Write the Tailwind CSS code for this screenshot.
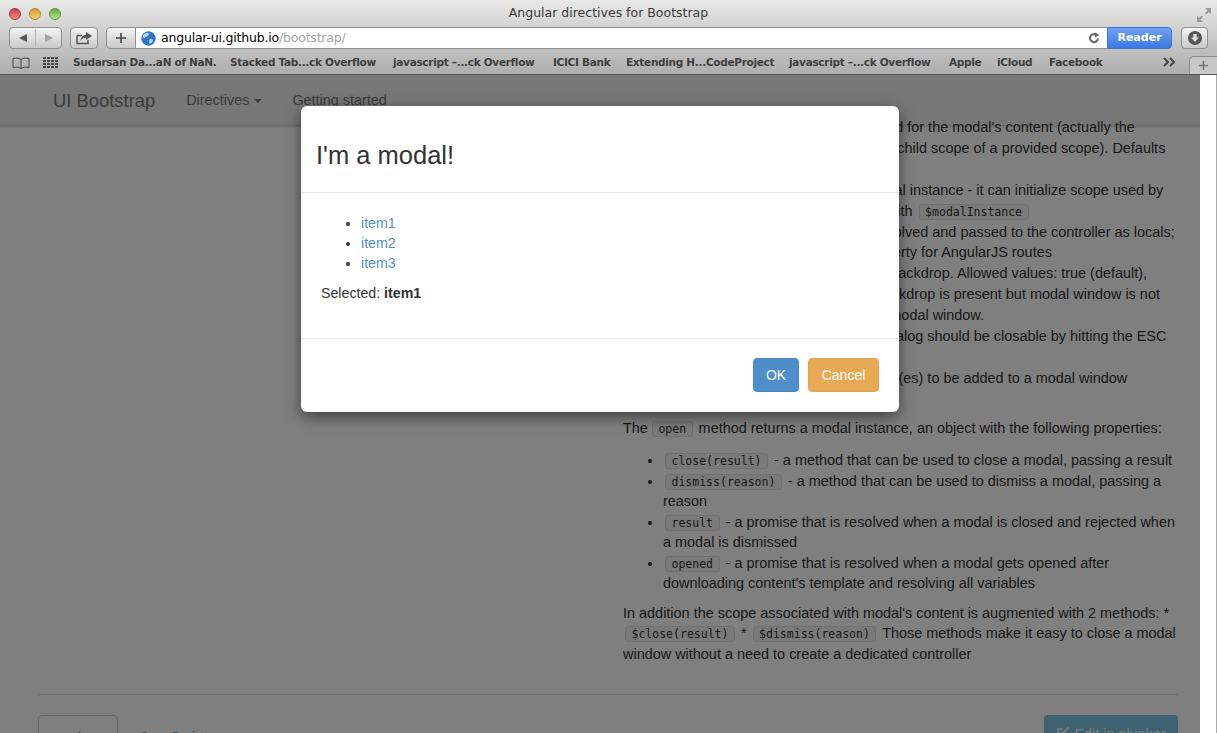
<!DOCTYPE html>
<html lang="en">
<head>
    <meta charset="UTF-8">
    <title>Angular directives for Bootstrap</title>
    <script src="https://cdn.jsdelivr.net/npm/@tailwindcss/browser@4"></script>
</head>
<body class="h-[733px] w-[1217px] overflow-hidden bg-white font-['Liberation_Sans',sans-serif] text-[#333]">

    <!-- Safari chrome -->
    <header class="relative z-30 h-[75px] border-b border-[#555] bg-gradient-to-b from-[#e9e9e9] via-[#c4c4c4] via-60% to-[#aeaeae] font-['DejaVu_Sans',sans-serif]">
        <div class="h-[51px] pt-[2px]">
            <div class="relative flex h-[25px] items-center justify-center pb-[2px] text-[12.5px] text-[#3a3a3a]">
                <div class="absolute left-[9px] top-[6px] flex gap-[8px]">
                    <span class="size-[12px] rounded-full border border-[#a33] bg-gradient-to-b from-[#c8424a] to-[#f58a84]"></span>
                    <span class="size-[12px] rounded-full border border-[#b5832a] bg-gradient-to-b from-[#d49a2e] to-[#f7d170]"></span>
                    <span class="size-[12px] rounded-full border border-[#5b9a3a] bg-gradient-to-b from-[#6aaa3c] to-[#b3e58e]"></span>
                </div>
                Angular directives for Bootstrap
                <svg class="absolute right-[5px] top-[5px]" width="16" height="16" viewBox="0 0 16 16" fill="#9a9a9a"><path d="M9 1h6v6l-2-2-2.500 2.500-1.500-1.500 2.500-2.500zM7 15H1V9l2 2 2.500-2.500 1.500 1.500L4.500 12.500z"/></svg>
            </div>
            <div class="flex h-[22px] items-center pl-[9px]">
                <div class="flex h-[22px] w-[53px] items-center rounded-[4px] border border-[#8f8f8f] bg-gradient-to-b from-[#f4f4f4] to-[#c9c9c9]">
                    <span class="flex flex-1 justify-center"><svg width="10" height="10" viewBox="0 0 10 10" fill="#555"><path d="M9 1v8L1 5z"/></svg></span>
                    <span class="h-[18px] w-px bg-[#b5b5b5]"></span>
                    <span class="flex flex-1 justify-center"><svg width="10" height="10" viewBox="0 0 10 10" fill="#a5a5a5"><path d="M1 1v8l8-4z"/></svg></span>
                </div>
                <div class="ml-[8px] flex h-[22px] w-[28px] items-center justify-center rounded-[4px] border border-[#8f8f8f] bg-gradient-to-b from-[#f4f4f4] to-[#c9c9c9]">
                    <svg width="18" height="14" viewBox="0 0 18 14" fill="none"><path d="M2 4.500h5M2 4.500v8h11V9" stroke="#555" stroke-width="1.500"/><path d="M11 1l6 4-6 4V6.800C8.500 6.800 6.500 8 5.500 10c.2-3.500 2.500-6 5.500-6.200z" fill="#555"/></svg>
                </div>
                <div class="ml-[8px] flex h-[22px] flex-1">
                    <div class="flex w-[30px] items-center justify-center rounded-l-[4px] border border-[#8f8f8f] bg-gradient-to-b from-[#f4f4f4] to-[#c9c9c9] text-[#444]">
                        <svg width="10" height="10" viewBox="0 0 10 10" fill="#444"><path d="M4.200 0h1.600v4.200H10v1.600H5.800V10H4.200V5.800H0V4.200h4.200z"/></svg>
                    </div>
                    <div class="flex flex-1 items-center border-y border-[#8f8f8f] bg-white pl-[5px] text-[12.5px] tracking-[-0.2px] text-black">
                        <svg class="mr-[5px] shrink-0" width="15" height="15" viewBox="0 0 15 15"><circle cx="7.500" cy="7.500" r="7.200" fill="#2f74c9"/><path d="M3 3c2-1.500 4-1.500 5-.5S7 5 5.500 5.500 4 8 2.500 7 1.800 4 3 3zM9 8c1.500-.5 3 0 3 1.500S10 13 8.800 12.500 8 8.500 9 8z" fill="#a9d2f5"/></svg>
                        <span>angular-ui.github.io</span><span class="text-[#a3a3a3]">/bootstrap/</span>
                        <svg class="ml-auto mr-[7px]" width="12" height="12" viewBox="0 0 12 12" fill="none"><path d="M10 6.500A4 4 0 1 1 8.500 3" stroke="#666" stroke-width="2"/><path d="M7 0.500l4.500 2.500-4.500 2.500z" fill="#666"/></svg>
                    </div>
                    <div class="flex w-[65px] items-center justify-center rounded-r-[4px] border border-[#3f74d0] bg-gradient-to-b from-[#6ea2f2] to-[#3a78e4] text-[11px] font-bold text-white">Reader</div>
                </div>
                <div class="mx-[9px] flex h-[22px] w-[27px] items-center justify-center rounded-[4px] border border-[#8f8f8f] bg-gradient-to-b from-[#f4f4f4] to-[#c9c9c9]">
                    <svg width="14" height="14" viewBox="0 0 14 14"><circle cx="7" cy="7" r="7" fill="#555"/><path d="M5.300 3h3.400v3.500H11L7 11 3 6.500h2.300z" fill="#ddd"/></svg>
                </div>
            </div>
        </div>
        <div class="relative flex h-[23px] items-center pl-[12px] text-[10.5px] font-bold tracking-[-0.3px] whitespace-nowrap text-[#3f3f3f]">
            <svg class="shrink-0" width="18" height="12" viewBox="0 0 18 12" fill="none" stroke="#444"><path d="M9 2.500C7 1 4 .8 1 1.500v9c3-.7 6-.5 8 1 2-1.500 5-1.700 8-1v-9c-3-.7-6-.5-8 1zM9 2.500v9"/></svg>
            <svg class="ml-[13px] mr-[15px] shrink-0" width="15" height="11" viewBox="0 0 15 11" fill="#444"><path d="M0 0h3v2H0zM4 0h3v2H4zM8 0h3v2H8zM12 0h3v2h-3zM0 3h3v2H0zM4 3h3v2H4zM8 3h3v2H8zM12 3h3v2h-3zM0 6h3v2H0zM4 6h3v2H4zM8 6h3v2H8zM12 6h3v2h-3zM0 9h3v2H0zM4 9h3v2H4zM8 9h3v2H8zM12 9h3v2h-3z"/></svg>
            <span class="w-[157px]">Sudarsan Da...aN of NaN.</span>
            <span class="w-[163px]">Stacked Tab...ck Overflow</span>
            <span class="w-[160px]">javascript –...ck Overflow</span>
            <span class="w-[73px]">ICICI Bank</span>
            <span class="w-[163px]">Extending H...CodeProject</span>
            <span class="w-[160px]">javascript –...ck Overflow</span>
            <span class="w-[48px]">Apple</span>
            <span class="w-[52px]">iCloud</span>
            <span>Facebook</span>
            <svg class="absolute right-[40px] top-[6px]" width="14" height="10" viewBox="0 0 14 10" fill="none" stroke="#444" stroke-width="2"><path d="M1 1l4 4-4 4M7 1l4 4-4 4"/></svg>
            <div class="absolute bottom-0 right-0 flex h-[18px] w-[28px] items-center justify-center rounded-tl-[5px] border-l border-t border-[#8d8d8d] bg-[#c8c8c8] font-normal text-[#555]">
                <svg width="9" height="9" viewBox="0 0 9 9" fill="#777"><path d="M3.700 0h1.600v3.700H9v1.600H5.300V9H3.700V5.300H0V3.700h3.700z"/></svg>
            </div>
        </div>
    </header>

    <!-- page behind the backdrop -->
    <div class="relative flex h-[658px] overflow-hidden">
        <div class="relative w-[1200px] shrink-0 overflow-hidden bg-white">
            <nav class="flex h-[51px] items-center border-b border-[#d4d4d4] bg-[#eee] pl-[53px] pt-[2px] text-[#777] shadow-[0_1px_2px_rgba(0,0,0,0.15)]">
                <span class="text-[18.4px]">UI Bootstrap</span>
                <span class="ml-[31px] text-[14.4px]">Directives <span class="ml-[1px] inline-block border-x-[4px] border-t-[4px] border-x-transparent border-t-[#777] align-middle"></span></span>
                <span class="ml-[30px] text-[14.4px]">Getting started</span>
            </nav>
            <div class="ml-[623px] w-[555px] text-[14.45px] text-[#333]">
                <ul class="-mt-[9px] list-disc pl-[40px] leading-[20.9px] whitespace-nowrap">
                    <li><code class="rounded-[3px] border border-[#e2e2e2] bg-[#f5f5f5] px-[5.5px] font-['DejaVu_Sans_Mono',monospace] text-[11.5px] leading-none">scope</code> - a scope instance to be used for the modal's content (actually the<br><code class="rounded-[3px] border border-[#e2e2e2] bg-[#f5f5f5] px-[5.5px] font-['DejaVu_Sans_Mono',monospace] text-[11.5px] leading-none">$modal</code> service is going to create a child scope of a provided scope). Defaults<br>to $rootScope</li>
                    <li><code class="rounded-[3px] border border-[#e2e2e2] bg-[#f5f5f5] px-[5.5px] font-['DejaVu_Sans_Mono',monospace] text-[11.5px] leading-none">controller</code> - a controller for a modal instance - it can initialize scope used by<br>modal. A controller can be injected with <code class="ml-[2px] rounded-[3px] border border-[#e2e2e2] bg-[#f5f5f5] px-[5.5px] font-['DejaVu_Sans_Mono',monospace] text-[11.5px] leading-none">$modalInstance</code></li>
                    <li><code class="rounded-[3px] border border-[#e2e2e2] bg-[#f5f5f5] px-[5.5px] font-['DejaVu_Sans_Mono',monospace] text-[11.5px] leading-none">resolve</code> - members that will be resolved and passed to the controller as locals;<br>it is equivalent of the <code class="rounded-[3px] border border-[#e2e2e2] bg-[#f5f5f5] px-[5.5px] font-['DejaVu_Sans_Mono',monospace] text-[11.5px] leading-none">resolve</code> property for AngularJS routes</li>
                    <li><code class="rounded-[3px] border border-[#e2e2e2] bg-[#f5f5f5] px-[5.5px] font-['DejaVu_Sans_Mono',monospace] text-[11.5px] leading-none">backdrop</code> - controls presence of a backdrop. Allowed values: true (default),<br>false (no backdrop), <code class="rounded-[3px] border border-[#e2e2e2] bg-[#f5f5f5] px-[5.5px] font-['DejaVu_Sans_Mono',monospace] text-[11.5px] leading-none">'static'</code> - backdrop is present but modal window is not<br>closed when clicking outside of the modal window.</li>
                    <li><code class="rounded-[3px] border border-[#e2e2e2] bg-[#f5f5f5] px-[5.5px] font-['DejaVu_Sans_Mono',monospace] text-[11.5px] leading-none">keyboard</code> - indicates whether the dialog should be closable by hitting the ESC<br>key, defaults to true</li>
                    <li><span class="mr-[6px]">windowClass</span> - additional CSS class(es) to be added to a modal window<br>template</li>
                </ul>
                <p class="mt-[8px] leading-[20.5px]">The <code class="mr-[2px] rounded-[3px] border border-[#e2e2e2] bg-[#f5f5f5] px-[5.5px] font-['DejaVu_Sans_Mono',monospace] text-[11.5px] leading-none">open</code> method returns a modal instance, an object with the following properties:</p>
                <ul class="mt-[12px] list-disc pl-[40px] leading-[20.5px]">
                    <li><code class="mx-[2px] rounded-[3px] border border-[#e2e2e2] bg-[#f5f5f5] px-[5.5px] font-['DejaVu_Sans_Mono',monospace] text-[11.5px] leading-none">close(result)</code> - a method that can be used to close a modal, passing a result</li>
                    <li><code class="mx-[2px] rounded-[3px] border border-[#e2e2e2] bg-[#f5f5f5] px-[5.5px] font-['DejaVu_Sans_Mono',monospace] text-[11.5px] leading-none">dismiss(reason)</code> - a method that can be used to dismiss a modal, passing a reason</li>
                    <li><code class="mx-[2px] rounded-[3px] border border-[#e2e2e2] bg-[#f5f5f5] px-[5.5px] font-['DejaVu_Sans_Mono',monospace] text-[11.5px] leading-none">result</code> - a promise that is resolved when a modal is closed and rejected when a modal is dismissed</li>
                    <li><code class="mx-[2px] rounded-[3px] border border-[#e2e2e2] bg-[#f5f5f5] px-[5.5px] font-['DejaVu_Sans_Mono',monospace] text-[11.5px] leading-none">opened</code> - a promise that is resolved when a modal gets opened after downloading content's template and resolving all variables</li>
                </ul>
                <p class="mt-[9px] leading-[20.5px]">In addition the scope associated with modal's content is augmented with 2 methods: * <code class="mx-[2px] rounded-[3px] border border-[#e2e2e2] bg-[#f5f5f5] px-[5.5px] font-['DejaVu_Sans_Mono',monospace] text-[11.5px] leading-none">$close(result)</code> * <code class="mx-[2px] rounded-[3px] border border-[#e2e2e2] bg-[#f5f5f5] px-[5.5px] font-['DejaVu_Sans_Mono',monospace] text-[11.5px] leading-none">$dismiss(reason)</code> Those methods make it easy to close a modal window without a need to create a dedicated controller</p>
            </div>
            <div class="ml-[38px] mr-[22px] mt-[30px] flex border-t border-[#ddd] pt-[20px] text-[14.4px]">
                <span class="h-[40px] w-[80px] rounded-t-[4px] border border-[#ccc] pl-[14px] pt-[12px] text-[#555]">Markup</span>
                <span class="ml-[22px] pt-[12px] text-[#428bca]">JavaScript</span>
                <span class="ml-auto flex h-[40px] w-[134px] items-start justify-center rounded-[4px] bg-[#7dc5e5] pt-[9px] text-white">
                    <svg class="mr-[4px] mt-[2px]" width="14" height="14" viewBox="0 0 14 14" fill="none" stroke="#fff" stroke-width="1.500"><path d="M12 8v4H2V3h5M5.500 8.500l7-7M5 9l.5-2L7 8.500z"/></svg>Edit in plunker
                </span>
            </div>
            <!-- backdrop only covers the page, not the scrollbar -->
            <div class="absolute inset-0 bg-black/50"></div>
        </div>
        <div class="flex-1 border-r border-[#aaa] bg-white"></div>

        <!-- modal -->
        <div class="absolute left-[301px] top-[31px] flex h-[306px] w-[598px] flex-col rounded-[6px] bg-white text-[14.2px] leading-[20px] shadow-[0_5px_15px_rgba(0,0,0,0.5)]">
            <div class="h-[87px] border-b border-[#e5e5e5] pl-[15px] pt-[36px]">
                <h3 class="text-[25.5px] leading-[26px] text-[#333]">I'm a modal!</h3>
            </div>
            <div class="h-[146px] border-b border-[#e5e5e5] pl-[20px] pt-[20px]">
                <ul class="list-disc pl-[40px] text-[#4f8fcc] marker:text-[#333]">
                    <li>item1</li>
                    <li>item2</li>
                    <li>item3</li>
                </ul>
                <p class="mt-[10px]">Selected: <b>item1</b></p>
            </div>
            <div class="flex flex-1 items-start justify-end gap-[9px] pr-[20px] pt-[19px] text-[14px]">
                <button class="h-[34px] w-[46px] rounded-[4px] border border-[#4a88c2] bg-[#4e8ec9] text-white">OK</button>
                <button class="h-[34px] w-[71px] rounded-[4px] border border-[#e5a550] bg-[#e8a955] text-white">Cancel</button>
            </div>
        </div>
    </div>
</body>
</html>
